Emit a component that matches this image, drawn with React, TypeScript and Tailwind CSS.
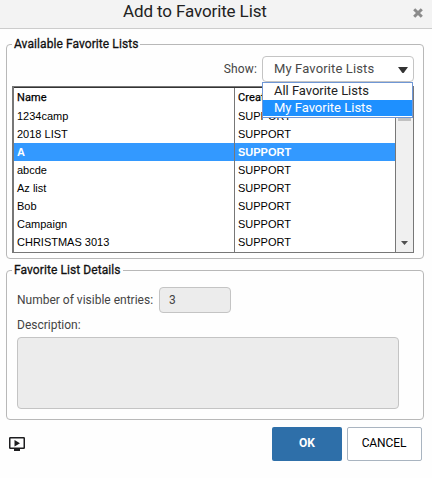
import clsx from 'clsx';

interface FavoriteList {
  name: string;
  createdBy: string;
  selected?: boolean;
}

const LISTS: FavoriteList[] = [
  { name: '1234camp', createdBy: 'SUPPORT' },
  { name: '2018 LIST', createdBy: 'SUPPORT' },
  { name: 'A', createdBy: 'SUPPORT', selected: true },
  { name: 'abcde', createdBy: 'SUPPORT' },
  { name: 'Az list', createdBy: 'SUPPORT' },
  { name: 'Bob', createdBy: 'SUPPORT' },
  { name: 'Campaign', createdBy: 'SUPPORT' },
  { name: 'CHRISTMAS 3013', createdBy: 'SUPPORT' },
];

function CloseIcon() {
  return (
    <svg viewBox="0 0 10 10" className="h-[10px] w-[10px]">
      <path d="M1.2 1.2 8.8 8.8M8.8 1.2 1.2 8.8" stroke="#8b8b8b" strokeWidth="3" />
    </svg>
  );
}

function VideoIcon() {
  return (
    <svg viewBox="0 0 16 14" className="h-[14px] w-4">
      <rect x="0.75" y="0.75" width="14.5" height="10.5" rx="0.6" fill="none" stroke="#1d1d1f" strokeWidth="1.5" />
      <path d="M5.5 3v6.4L11 6.2z" fill="#1d1d1f" />
      <path d="M5 12h6v2H5z" fill="#1d1d1f" />
    </svg>
  );
}

function ShowSelect() {
  return (
    <div className="relative h-[26px] w-[152px]">
      <div className="flex h-full items-center justify-between rounded-[4px] border border-[#c4c4c4] bg-white pr-[5px] pl-[11px] text-[13px] tracking-[0.13px] text-[#4a4a4a]">
        My Favorite Lists
        <svg viewBox="0 0 10 6" className="mt-[2px] h-[6px] w-[10px]">
          <path d="M0 0h10L6 5.4Q5 6.4 4 5.4z" fill="#333" />
        </svg>
      </div>
      <ul className="absolute top-[26px] left-0 z-10 h-[36px] w-[151px] border border-[#6f97d6] bg-white text-[13px] text-[#222]">
        <li className="h-[17px] pl-[11px] leading-[16px] tracking-[-0.03px]">All Favorite Lists</li>
        <li className="h-[16px] bg-[#1e90ff] pl-[11px] leading-[15px] tracking-[0px] text-white">My Favorite Lists</li>
      </ul>
    </div>
  );
}

function ListTable() {
  return (
    <div className="flex h-[167px] w-[402px] border border-l-2 border-[#777] bg-white text-[11px] text-black">
      <div className="flex min-w-0 flex-1 flex-col border-t border-[#333]">
        <div className="flex h-[19px] font-['Roboto',sans-serif] leading-[19px] tracking-[0.1px]">
          <span className="w-[221px] border-r border-[#777] pl-[3px] [-webkit-text-stroke:0.25px]">Name</span>
          <span className="pl-[3px] [-webkit-text-stroke:0.25px]">Created By</span>
        </div>
        {LISTS.map((list) => (
          <div
            key={list.name}
            className={clsx(
              "flex h-[18px] font-['Liberation_Sans',sans-serif] leading-[18px]",
              list.selected && 'bg-[#3399ff] font-bold text-white',
            )}
          >
            <span className="w-[221px] border-r border-[#777] pl-[3px]">{list.name}</span>
            <span className="pl-[3px]">{list.createdBy}</span>
          </div>
        ))}
        <div className="w-[221px] flex-1 border-r border-[#777]" />
      </div>
      <div className="flex w-[18px] flex-col items-center justify-between border-l border-[#777] bg-[#f0f0f0] pb-[7px]">
        <div className="h-[34px] w-[13px] bg-[#c1c1c1]" />
        <svg viewBox="0 0 7 4" className="h-[4px] w-[7px]">
          <path d="M0 0h7L3.5 4z" fill="#505050" />
        </svg>
      </div>
    </div>
  );
}

export default function App() {
  return (
    <div className="h-[478px] w-[432px] overflow-hidden bg-[#fefefe] font-['Roboto',sans-serif]">
      <header className="flex h-[29px] items-center border-b border-[#ccc] bg-[#f3f3f3] pr-[9px] pl-[123px]">
        <h1 className="-mt-[6px] flex-1 text-[17px] leading-6 tracking-[-0.12px] whitespace-nowrap text-[#222]">Add to Favorite List</h1>
        <span className="-mt-[3px]">
          <CloseIcon />
        </span>
      </header>

      <fieldset className="mt-[7px] ml-[6px] h-[223px] w-[418px] rounded-[4px] border border-[#b8b8b8] px-[5px]">
        <legend className="h-[17px] px-[2px] text-[12px] leading-[16px] tracking-[0.08px] text-[#111] [-webkit-text-stroke:0.3px]">
          Available Favorite Lists
        </legend>
        <div className="mt-[3px] flex items-center justify-end gap-[5px] pr-[4px] text-[12px] text-[#444]">
          <span className="tracking-[0.15px]">Show:</span>
          <ShowSelect />
        </div>
        <div className="mt-[4px]">
          <ListTable />
        </div>
      </fieldset>

      <fieldset className="mt-[3px] ml-[6px] h-[158px] w-[418px] rounded-[4px] border border-[#b8b8b8] px-[5px]">
        <legend className="h-[17px] px-[2px] text-[12px] leading-[16px] tracking-[0.08px] text-[#111] [-webkit-text-stroke:0.3px]">
          Favorite List Details
        </legend>
        <div className="mt-[8px] pl-[5px] text-[12px] text-[#444]">
          <div className="flex items-center">
            <span className="w-[142px] whitespace-nowrap">Number of visible entries:</span>
            <div className="flex h-[26px] w-[72px] items-center rounded-[4px] border border-[#c4c4c4] bg-[#ececec] pl-[9px]">3</div>
          </div>
          <div className="h-[24px] leading-[24px]">Description:</div>
          <div className="h-[72px] w-[382px] rounded-[4px] border border-[#c4c4c4] bg-[#ececec]" />
        </div>
      </fieldset>

      <footer className="mt-[7px] flex h-[34px] items-center pr-[10px] pl-[9px]">
        <VideoIcon />
        <div className="ml-auto flex gap-[5px] text-[12px]">
          <button className="h-[34px] w-[70px] rounded-[2px] bg-[#2e6fa9] pb-[2px] font-bold text-white">OK</button>
          <button className="h-[34px] w-[75px] rounded-[2px] border border-[#a9b4c0] bg-white pr-[1px] pb-[2px] tracking-[-0.1px] text-black">
            CANCEL
          </button>
        </div>
      </footer>
    </div>
  );
}
